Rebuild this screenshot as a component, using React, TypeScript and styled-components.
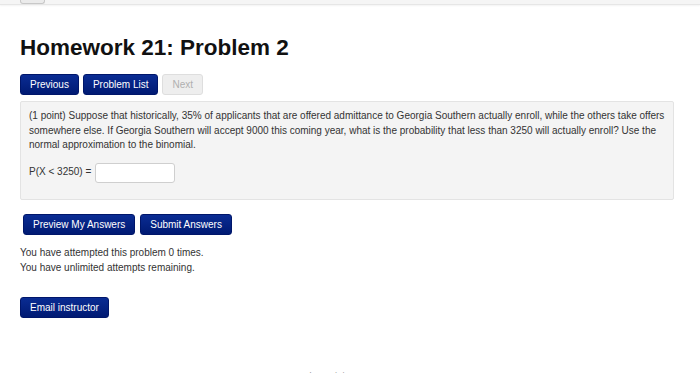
import React from 'react';
import styled, { createGlobalStyle } from 'styled-components';

const GlobalStyle = createGlobalStyle`
  html, body {
    margin: 0;
    padding: 0;
    background: #fff;
    font-family: 'Liberation Sans', Arial, sans-serif;
    color: #222;
  }
`;

const Page = styled.div`
  width: 700px;
  height: 373px;
  overflow: hidden;
`;

const TopStrip = styled.div`
  height: 4px;
  background: #f5f5f5;
  border-bottom: 1px solid #e6e6e6;
  box-shadow: 0 1px 2px rgba(0, 0, 0, 0.05);
  padding-left: 20px;
`;

const StripTab = styled.div`
  width: 23px;
  height: 3px;
  background: #ebebeb;
  border: 1px solid #c8c8c8;
  border-top: 0;
  border-radius: 0 0 3px 3px;
`;

const Content = styled.div`
  padding: 0 26px 0 20px;
`;

const Title = styled.h1`
  margin: 28px 0 0;
  font-size: 22.5px;
  line-height: 30px;
  font-weight: bold;
  color: #111;
`;

const NavRow = styled.div`
  display: flex;
  gap: 4px;
  margin-top: 11px;
`;

const Button = styled.button<{ $disabled?: boolean }>`
  height: 21px;
  padding: 0 9px;
  font-family: 'Liberation Sans', Arial, sans-serif;
  font-size: 10px;
  border-radius: 3px;
  cursor: pointer;
  color: ${p => (p.$disabled ? '#b0b0b0' : '#fff')};
  background: ${p =>
    p.$disabled ? '#eeeeee' : 'linear-gradient(#0a2c93, #001a73)'};
  border: 1px solid ${p => (p.$disabled ? '#dedede' : '#00166a')};
`;

const ProblemBox = styled.div`
  margin-top: 6px;
  background: #f4f4f4;
  border: 1px solid #e3e3e3;
  border-radius: 2px;
  padding: 7px 8px 16px;
  font-size: 10px;
  line-height: 14.5px;
  color: #333;
`;

const Statement = styled.p`
  margin: 0;
`;

const AnswerRow = styled.div`
  display: flex;
  align-items: center;
  gap: 4px;
  margin-top: 10px;
`;

const AnswerInput = styled.input`
  width: 80px;
  height: 20px;
  box-sizing: border-box;
  border: 1px solid #cfcfcf;
  border-radius: 3px;
  background: #fff;
  padding: 2px 4px;
`;

const SubmitRow = styled.div`
  display: flex;
  gap: 5px;
  margin: 14px 0 0 3px;
`;

const Info = styled.p`
  margin: 10px 0 0;
  font-size: 10px;
  line-height: 15px;
  color: #333;
`;

const EmailRow = styled.div`
  margin-top: 22px;
`;

const Footer = styled.div`
  margin-top: 52px;
  text-align: center;
  padding-right: 20px;
  font-size: 9px;
  line-height: 12px;
  color: #999;
`;

export default function App() {
  return (
    <Page>
      <GlobalStyle />
      <TopStrip>
        <StripTab />
      </TopStrip>
      <Content>
        <Title>Homework 21: Problem 2</Title>
        <NavRow>
          <Button>Previous</Button>
          <Button>Problem List</Button>
          <Button $disabled>Next</Button>
        </NavRow>
        <ProblemBox>
          <Statement>
            (1 point) Suppose that historically, 35% of applicants that are
            offered admittance to Georgia Southern actually enroll, while the
            others take offers somewhere else. If Georgia Southern will accept
            9000 this coming year, what is the probability that less than 3250
            will actually enroll? Use the normal approximation to the binomial.
          </Statement>
          <AnswerRow>
            <span>P(X &lt; 3250) =</span>
            <AnswerInput />
          </AnswerRow>
        </ProblemBox>
        <SubmitRow>
          <Button>Preview My Answers</Button>
          <Button>Submit Answers</Button>
        </SubmitRow>
        <Info>
          You have attempted this problem 0 times.
          <br />
          You have unlimited attempts remaining.
        </Info>
        <EmailRow>
          <Button>Email instructor</Button>
        </EmailRow>
        <Footer>Page generated at 12/8/2016 at 1:04am EST</Footer>
      </Content>
    </Page>
  );
}
